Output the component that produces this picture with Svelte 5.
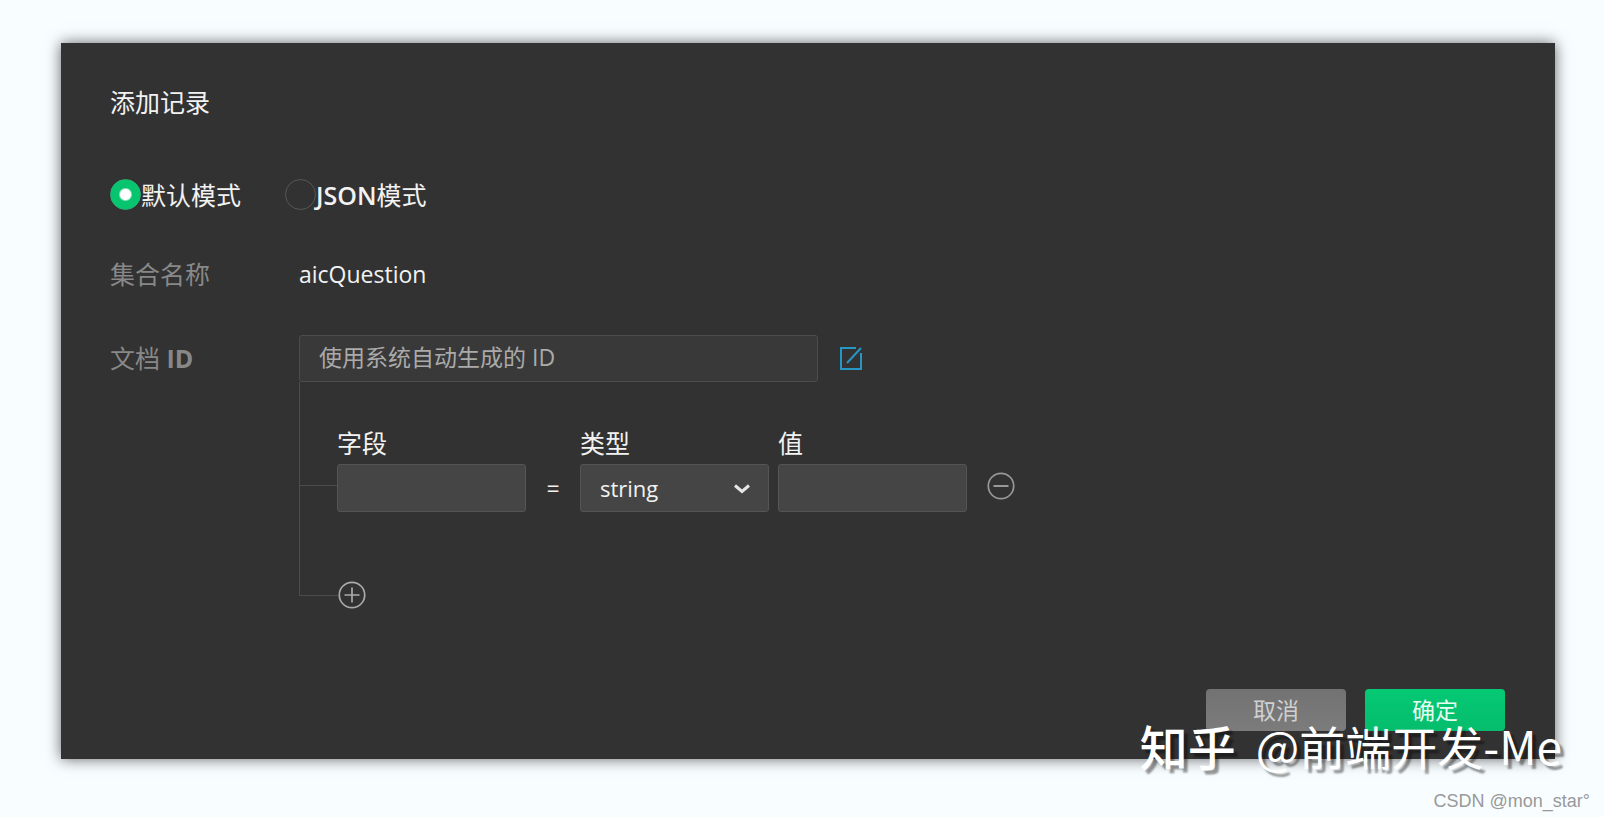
<script>
  let mode = $state('default');
  let type = $state('string');
  let field = $state('');
  let value = $state('');
</script>

<main class="page">
  <form class="dialog" onsubmit={(e) => e.preventDefault()}>
    <h1 class="title">添加记录</h1>

    <div class="modes">
      <label class="mode">
        <input type="radio" name="mode" value="default" bind:group={mode} /><span>默认模式</span>
      </label>
      <label class="mode">
        <input type="radio" name="mode" value="json" bind:group={mode} /><span><b>JSON</b>模式</span>
      </label>
    </div>

    <div class="row name-row">
      <span class="caption">集合名称</span>
      <span class="collection">aicQuestion</span>
    </div>

    <div class="row doc-row">
      <label class="caption" for="doc-id">文档 <b>ID</b></label>
      <div class="tree">
        <div class="doc-id">
          <input id="doc-id" class="box id-box" type="text" placeholder="使用系统自动生成的 ID" />
          <button class="icon-button" type="button">
            <svg width="24" height="24" viewBox="0 0 24 24" fill="none" stroke="#2796c4" stroke-width="2">
              <path d="M17 1H2V22H22V6" />
              <path d="M22 1L8 16" />
            </svg>
          </button>
        </div>

        <div class="record">
          <span class="branch"></span>
          <div class="cell">
            <label for="field">字段</label>
            <input id="field" class="box" type="text" bind:value={field} />
          </div>
          <span class="equals">=</span>
          <div class="cell">
            <label for="type">类型</label>
            <div class="select">
              <select id="type" class="box" bind:value={type}>
                <option>string</option>
              </select>
              <svg class="chevron" width="16" height="10" viewBox="0 0 16 10" fill="none" stroke="#e6e6e6" stroke-width="3">
                <path d="M1 1.5L8 7.5L15 1.5" />
              </svg>
            </div>
          </div>
          <div class="cell value-cell">
            <label for="value">值</label>
            <input id="value" class="box" type="text" bind:value={value} />
          </div>
          <button class="icon-button remove" type="button">
            <svg width="28" height="28" viewBox="0 0 28 28" fill="none" stroke="#999" stroke-width="1.7">
              <circle cx="14" cy="14" r="12.7" />
              <path d="M6.5 14H21.5" stroke-width="2" />
            </svg>
          </button>
        </div>

        <div class="add">
          <span class="branch"></span>
          <button class="icon-button" type="button">
            <svg width="28" height="28" viewBox="0 0 28 28" fill="none" stroke="#aaa" stroke-width="1.7">
              <circle cx="14" cy="14" r="12.7" />
              <path d="M6.5 14H21.5M14 6.5V21.5" />
            </svg>
          </button>
        </div>
      </div>
    </div>

    <div class="actions">
      <button class="action cancel" type="button">取消</button>
      <button class="action confirm" type="submit">确定</button>
    </div>
  </form>

  <div class="watermark"><span class="brand">知乎</span><span>@前端开发-Me</span></div>
  <div class="credit">CSDN @mon_star°</div>
</main>

<style>
  :global(body) {
    background: #f8fdff;
  }

  .page {
    position: relative;
    box-sizing: border-box;
    min-height: 100vh;
    padding: 43px 49px 56px 61px;
    font-family: 'Open Sans', 'Noto Sans CJK SC', sans-serif;
    font-size: 25px;
    line-height: 36px;
    color: #f2f2f2;
  }

  .dialog {
    padding: 41px 50px 28px 49px;
    background: #323232;
    box-shadow: 0 0 14px rgba(0, 0, 0, 0.6);
  }

  .title {
    margin: 0;
    font-size: 25px;
    font-weight: 400;
  }

  b {
    font-weight: 600;
  }

  .modes {
    display: flex;
    gap: 44px;
    margin-top: 55px;
  }

  .mode {
    display: flex;
    align-items: center;
  }

  .mode span {
    padding-top: 2px;
  }

  .mode input {
    appearance: none;
    box-sizing: border-box;
    width: 31px;
    height: 31px;
    margin: 0;
    border: 1px solid #575757;
    border-radius: 50%;
  }

  .mode input:checked {
    border-color: #22b573;
    background: radial-gradient(circle, #fff 5px, #07c46f 7px);
  }

  .row {
    display: grid;
    grid-template-columns: 189px 1fr;
  }

  .name-row {
    margin-top: 43px;
  }

  .caption {
    color: #888;
  }

  .caption b {
    font-weight: 700;
  }

  .collection {
    font-size: 23px;
  }

  .doc-row {
    margin-top: 43px;
  }

  .doc-row .caption {
    line-height: 46px;
  }

  .tree {
    position: relative;
  }

  .tree::before {
    content: '';
    position: absolute;
    top: 47px;
    bottom: 13px;
    left: 0;
    width: 1px;
    background: #4c4c4c;
  }

  .doc-id {
    display: flex;
    align-items: center;
    gap: 21px;
  }

  .box {
    box-sizing: border-box;
    width: 189px;
    height: 48px;
    margin: 0;
    padding: 0 19px;
    border: 1px solid #555;
    border-radius: 3px;
    background: #454545;
    color: #f2f2f2;
    font-family: inherit;
    font-size: 22px;
  }

  .id-box {
    width: 519px;
    height: 47px;
    padding-bottom: 3px;
    border-color: #4c4c4c;
    background: #393939;
    font-size: 23px;
  }

  .id-box::placeholder {
    color: #aaa;
    opacity: 1;
  }

  .icon-button {
    display: flex;
    padding: 0;
    border: 0;
    background: none;
  }

  .record {
    display: flex;
    align-items: flex-end;
    margin-top: 43px;
  }

  .branch {
    width: 38px;
    height: 1px;
    background: #4c4c4c;
  }

  .record .branch {
    margin-bottom: 26px;
  }

  .cell {
    display: flex;
    flex-direction: column;
    gap: 3px;
  }

  .value-cell {
    margin-left: 9px;
  }

  .equals {
    width: 54px;
    font-size: 23px;
    line-height: 48px;
    text-align: center;
  }

  .select {
    position: relative;
    display: flex;
  }

  select.box {
    appearance: none;
  }

  .chevron {
    position: absolute;
    top: 20px;
    right: 19px;
    pointer-events: none;
  }

  .remove {
    margin: 0 0 12px 20px;
  }

  .add {
    display: flex;
    align-items: center;
    margin-top: 69px;
  }

  .add .branch {
    width: 39px;
  }

  .actions {
    display: flex;
    justify-content: flex-end;
    gap: 19px;
    margin-top: 80px;
  }

  .action {
    width: 140px;
    height: 42px;
    padding: 0;
    border: 0;
    border-radius: 4px;
    font-family: inherit;
    font-size: 23px;
    line-height: 40px;
  }

  .cancel {
    background: linear-gradient(#727272, #7c7c7c);
    color: #d0d0d0;
  }

  .confirm {
    background: linear-gradient(#05c974, #05bd6d);
    color: #e4fff2;
  }

  .watermark {
    position: absolute;
    right: 42px;
    bottom: 39px;
    display: flex;
    gap: 20px;
    font-family: 'Noto Sans CJK SC', sans-serif;
    font-size: 46px;
    line-height: 66px;
    color: #fff;
    text-shadow: 4px 4px 2px rgba(0, 0, 0, 0.4);
    white-space: nowrap;
    pointer-events: none;
  }

  .brand {
    font-size: 48px;
    font-weight: 500;
  }

  .credit {
    position: absolute;
    right: 14px;
    bottom: 4px;
    font-family: 'Liberation Sans', sans-serif;
    font-size: 18px;
    line-height: 24px;
    color: #999;
  }
</style>
